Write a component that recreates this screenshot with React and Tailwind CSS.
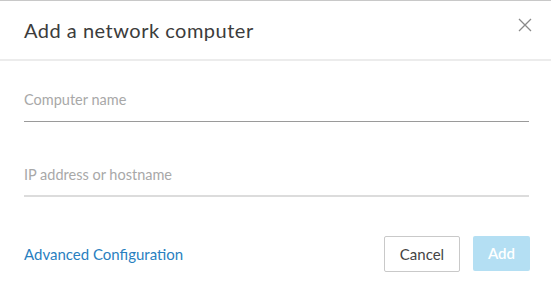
export default function App() {
  return (
    <div className="w-[551px] h-[281px] bg-white border-t border-[#c8c8c8] font-['Lato',sans-serif]">
      <div className="h-[60px] flex items-center justify-between pl-6 pr-[19px] border-b-2 border-[#ececec]">
        <h1 className="text-[20px] text-[#3c3c3c] tracking-[0.5px]">Add a network computer</h1>
        <button className="text-[#8a8a8a] mb-[11px]">
          <svg width="14" height="14" viewBox="0 0 14 14" fill="none" stroke="currentColor" strokeWidth="1.3">
            <path d="M1 1L13 13M13 1L1 13" />
          </svg>
        </button>
      </div>
      <div className="pl-6 pr-[22px] pt-[29px]">
        <div className="border-b border-[#9a9a9a] pb-[11px]">
          <input placeholder="Computer name" className="block w-full h-[20px] outline-none text-[14.5px] text-[#333] placeholder:text-[#a8a8a8]" />
        </div>
        <div className="mt-[43px] border-b-2 border-[#dcdcdc] pb-[10px]">
          <input placeholder="IP address or hostname" className="block w-full h-[20px] outline-none text-[14.5px] text-[#333] placeholder:text-[#a8a8a8]" />
        </div>
      </div>
      <div className="flex items-center justify-between pl-6 pr-[21px] mt-[39px]">
        <a href="#" className="text-[15px] text-[#2a7fbf]">Advanced Configuration</a>
        <div className="flex gap-[13px]">
          <button className="w-[76px] h-[36px] border border-[#c9c9c9] rounded-[2px] text-[15px] text-[#444]">Cancel</button>
          <button className="w-[57px] h-[35px] bg-[#b4dff3] rounded-[2px] text-[15px] text-white font-semibold">Add</button>
        </div>
      </div>
    </div>
  )
}
